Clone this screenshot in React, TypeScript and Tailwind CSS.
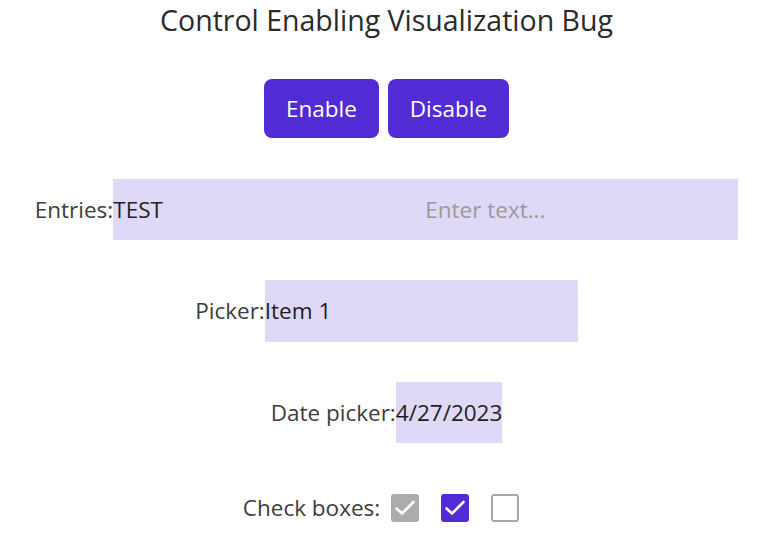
import React from 'react'

const font = { fontFamily: '"Open Sans", "Noto Sans", sans-serif' }

function Check({ state }: { state: 'disabled' | 'checked' | 'empty' }) {
  if (state === 'empty') {
    return <span className="block h-[28px] w-[28px] rounded-[3px] border-[2px] border-[#a8a8a8] bg-white" />
  }
  return (
    <span
      className={`flex h-[28px] w-[28px] items-center justify-center rounded-[3px] ${
        state === 'checked' ? 'bg-[#512bd4]' : 'bg-[#acacac]'
      }`}
    >
      <svg width="28" height="28" viewBox="0 0 28 28" fill="none">
        <path d="M5.5 14.5 L11 19.5 L22.5 8" stroke="white" strokeWidth="2.6" strokeLinecap="round" strokeLinejoin="round" />
      </svg>
    </span>
  )
}

export default function App() {
  return (
    <div className="flex min-h-[538px] w-full flex-col items-center bg-white pl-[7px] text-[#3d3d3d]" style={font}>
      <h1 className="mt-[1px] text-[28.5px] leading-[39px] font-normal text-[#2b2b2b]">
        Control Enabling Visualization Bug
      </h1>

      <div className="mt-[39px] flex gap-[9px]">
        {['Enable', 'Disable'].map((b) => (
          <button
            key={b}
            className="h-[59px] rounded-[8px] bg-[#512bd4] px-[22px] text-[22.5px] text-white"
          >
            {b}
          </button>
        ))}
      </div>

      <div className="mt-[41px] flex h-[61px] items-center">
        <span className="text-[22.5px]">Entries:</span>
        <input
          readOnly
          value="TEST"
          className="h-[61px] w-[312px] bg-[#dfd8f7] text-[22.5px] text-[#1f1f1f] outline-none"
          style={font}
        />
        <input
          readOnly
          placeholder="Enter text..."
          className="h-[61px] w-[313px] bg-[#dfd8f7] text-[22.5px] outline-none placeholder:text-[#9a9a9a]"
          style={font}
        />
      </div>

      <div className="mt-[40px] flex h-[62px] items-center">
        <span className="text-[22.5px]">Picker:</span>
        <div className="flex h-[62px] w-[313px] items-center bg-[#dfd8f7] text-[22.5px] text-[#1f1f1f]">
          Item 1
        </div>
      </div>

      <div className="mt-[40px] flex h-[61px] items-center">
        <span className="text-[22.5px]">Date picker:</span>
        <div className="flex h-[61px] items-center bg-[#dfd8f7] text-[22.5px] text-[#1f1f1f]">
          4/27/2023
        </div>
      </div>

      <div className="mt-[40px] flex h-[50px] items-center pr-[11px]">
        <span className="mr-[11px] text-[22.5px]">Check boxes:</span>
        <div className="flex gap-[22px]">
          <Check state="disabled" />
          <Check state="checked" />
          <Check state="empty" />
        </div>
      </div>
    </div>
  )
}
